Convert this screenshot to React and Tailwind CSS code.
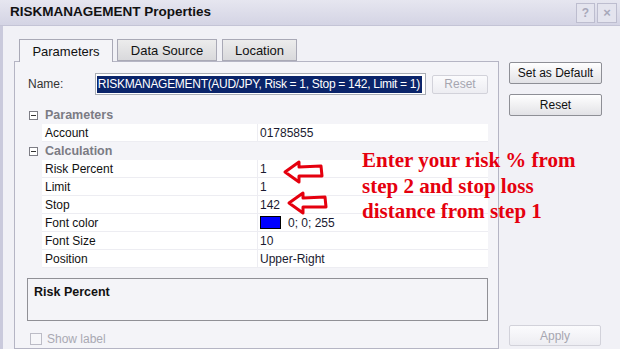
const UI = { fontFamily: '"Liberation Sans", Arial, sans-serif' };

const params = [
  { type: 'cat', label: 'Parameters' },
  { type: 'row', label: 'Account', value: '01785855' },
  { type: 'cat', label: 'Calculation' },
  { type: 'row', label: 'Risk Percent', value: '1' },
  { type: 'row', label: 'Limit', value: '1' },
  { type: 'row', label: 'Stop', value: '142' },
  { type: 'row', label: 'Font color', value: '0; 0; 255', swatch: true },
  { type: 'row', label: 'Font Size', value: '10' },
  { type: 'row', label: 'Position', value: 'Upper-Right' },
];

function Collapse() {
  return (
    <span className="flex h-[9px] w-[9px] items-center justify-center border border-[#7d7d85] bg-white">
      <span className="h-px w-[5px] bg-[#333]" />
    </span>
  );
}

function Btn({ children, disabled, className = '' }) {
  return (
    <div
      className={`flex items-center justify-center rounded-[2px] border text-[12px] ${
        disabled
          ? 'border-[#d2d2da] bg-gradient-to-b from-[#fbfbfd] to-[#ededf2] text-[#a6a6b0]'
          : 'border-[#8e8f96] bg-gradient-to-b from-[#ffffff] to-[#e2e2e6] text-[#111]'
      } ${className}`}
    >
      {children}
    </div>
  );
}

function Arrow({ className }) {
  return (
    <svg viewBox="0 0 42 24" className={className}>
      <polygon
        points="3,12 17,2 17,7 39,6 40,16 17,16 17,22"
        fill="none"
        stroke="#e5000e"
        strokeWidth="3"
        strokeLinejoin="round"
      />
    </svg>
  );
}

export default function App() {
  return (
    <div className="relative flex h-[349px] w-[620px] flex-col overflow-hidden bg-[#f1f1f6]" style={UI}>
      {/* title bar */}
      <div className="flex h-[27px] items-center justify-between border-b border-[#c4c4d6] bg-gradient-to-b from-[#e6e6f0] to-[#d4d4e4] pl-[10px] pr-[3px]">
        <span className="text-[13.5px] font-bold text-[#111]">RISKMANAGEMENT Properties</span>
        <div className="flex gap-[2px]">
          <div className="flex h-[20px] w-[19px] items-center justify-center border border-[#bdbdcf] bg-[#e4e4ee] text-[12px] font-bold text-[#a8a8ba]">?</div>
          <div className="flex h-[20px] w-[20px] items-center justify-center border border-[#bdbdcf] bg-[#e4e4ee] text-[13px] font-bold text-[#a8a8ba]">×</div>
        </div>
      </div>

      <div className="flex flex-1 border-l-[3px] border-[#cacadc]">
        {/* left: tabs + panel */}
        <div className="ml-[11px] mt-[13px] flex w-[485px] flex-col">
          <div className="flex h-[22px] items-end pl-[5px]">
            <div className="relative z-10 -mb-px flex h-[23px] w-[94px] items-center justify-center border border-b-0 border-[#a9a9b6] bg-[#f4f4f8] pt-[2px] text-[13px] text-[#111]">Parameters</div>
            <div className="ml-[4px] flex h-[22px] w-[100px] items-center justify-center border border-[#a9a9b6] bg-gradient-to-b from-[#ececec] to-[#d9d9dc] pt-[1px] text-[13px] text-[#111]">Data Source</div>
            <div className="ml-[5px] flex h-[22px] w-[75px] items-center justify-center border border-[#a9a9b6] bg-gradient-to-b from-[#ececec] to-[#d9d9dc] pt-[1px] text-[13px] text-[#111]">Location</div>
          </div>

          <div className="flex flex-1 flex-col border border-[#b5b5c4] bg-[#f4f4f8] pl-[12px] pr-[10px]">
            {/* name row */}
            <div className="mt-[11px] flex items-center">
              <span className="w-[68px] pl-[1px] text-[12px] text-[#333]">Name:</span>
              <div className="flex h-[22px] w-[332px] items-center border border-[#a9adb5] bg-white px-px">
                <span className="flex h-[17px] items-center bg-[#0a246a] pl-[1px] pr-[2px] text-[12px] tracking-[-0.3px] text-white">
                  RISKMANAGEMENT(AUD/JPY, Risk = 1, Stop = 142, Limit = 1)
                </span>
              </div>
              <Btn disabled className="ml-[6px] h-[19px] w-[56px]">Reset</Btn>
            </div>

            {/* property grid */}
            <div className="mt-[11px] flex w-[461px] flex-col text-[12px]">
              {params.map((p) =>
                p.type === 'cat' ? (
                  <div key={p.label} className="flex h-[18px] items-center">
                    <span className="ml-[2px] w-[16px]"><Collapse /></span>
                    <span className="text-[12.5px] font-bold text-[#7b7b84]">{p.label}</span>
                  </div>
                ) : (
                  <div key={p.label} className="flex h-[18px] pl-[15px]">
                    <div className="flex flex-1 border-b border-[#ededf2] bg-white">
                      <span className="flex w-[216px] items-center border-r border-[#ededf2] pl-[3px] text-[#111]">{p.label}</span>
                      <span className="flex items-center pl-[2px] text-[#1a1a30]">
                        {p.swatch && <span className="mr-[7px] h-[13px] w-[21px] border border-black bg-[#0000ff]" />}
                        {p.value}
                      </span>
                    </div>
                  </div>
                )
              )}
            </div>

            {/* description */}
            <div className="mt-[10px] h-[43px] w-[461px] border border-[#909096] bg-[#f4f4f8] px-[6px] pt-[4px] text-[12.5px] font-bold text-[#111]">
              Risk Percent
            </div>

            <div className="mt-[9px] flex items-center pl-[3px]">
              <span className="h-[12px] w-[12px] border border-[#bcbcc6] bg-[#f6f6f9]" />
              <span className="ml-[5px] text-[12px] text-[#a9a9b3]">Show label</span>
            </div>
          </div>
        </div>

        {/* right buttons */}
        <div className="ml-[10px] flex flex-col pb-[3px] pt-[36px]">
          <Btn className="h-[22px] w-[93px]">Set as Default</Btn>
          <Btn className="mt-[10px] h-[22px] w-[93px]">Reset</Btn>
          <Btn disabled className="mt-auto h-[21px] w-[92px]">Apply</Btn>
        </div>
      </div>

      {/* annotation overlay */}
      <Arrow className="absolute left-[282px] top-[160px] h-[24px] w-[42px]" />
      <Arrow className="absolute left-[286px] top-[191px] h-[24px] w-[42px]" />
      <div
        className="absolute left-[362px] top-[148px] text-[21px] font-bold leading-[25.5px] text-[#e5000e]"
        style={{ fontFamily: '"Liberation Serif", "Times New Roman", serif' }}
      >
        <div>Enter your risk % from</div>
        <div>step 2 and stop loss</div>
        <div>distance from step 1</div>
      </div>
    </div>
  );
}
